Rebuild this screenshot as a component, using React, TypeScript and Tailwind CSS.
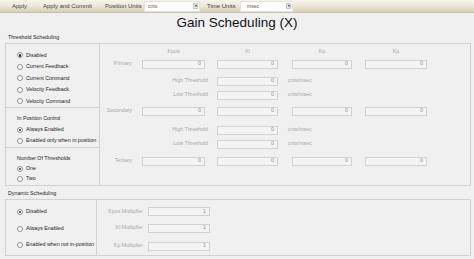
import React from "react";

function Radio({ checked, label, className = "" }: { checked?: boolean; label: string; className?: string }) {
  return (
    <div className={"flex items-center " + className}>
      <div className="ml-[11px] w-[6px] h-[6px] rounded-full border border-[#8e8f8f] bg-white flex items-center justify-center shrink-0">
        {checked ? <div className="w-[2.5px] h-[2.5px] rounded-full bg-[#2a2a2a]" /> : null}
      </div>
      <span className="ml-[3px] whitespace-nowrap">{label}</span>
    </div>
  );
}

function Input({ value, w }: { value: string; w: string }) {
  return (
    <div className={"h-[9px] border border-[#d2d2d2] bg-[#f4f4f4] flex items-center justify-end pr-[3px] text-[#909090] shrink-0 " + w}>
      {value}
    </div>
  );
}

function Combo({ text, w, pl }: { text: string; w: string; pl: string }) {
  return (
    <div className={"h-[11px] bg-white border border-[#e4e2da] flex items-center justify-between pr-[1px] shrink-0 " + w + " " + pl}>
      <span className="text-[5px] text-[#555]">{text}</span>
      <div className="w-[5px] h-[6px] bg-[#e2e2e2] border border-[#c4c4c4] flex items-center justify-center">
        <div className="w-0 h-0 border-l-[1.5px] border-r-[1.5px] border-t-[2px] border-l-transparent border-r-transparent border-t-[#333]" />
      </div>
    </div>
  );
}

export default function App() {
  return (
    <div className="w-[474px] h-[259px] bg-[#f0f0f0] overflow-hidden font-['Liberation_Sans','Arial',sans-serif] leading-none">
      {/* toolbar */}
      <div className="h-[13px] flex items-center bg-linear-to-b from-[#f7f6ee] via-[#ebe8da] to-[#d6d0b8] border-b border-[#c8c2a9] text-[6px] text-[#3c3c3c]">
        <div className="w-[12px] shrink-0" />
        <div className="w-[31px] shrink-0">Apply</div>
        <div className="w-[62px] shrink-0">Apply and Commit</div>
        <div className="w-[39px] shrink-0">Position Units</div>
        <Combo text="cnts" w="w-[56px]" pl="pl-[3px]" />
        <div className="w-[7px] shrink-0" />
        <div className="w-[33px] shrink-0">Time Units</div>
        <Combo text="msec" w="w-[53px]" pl="pl-[6px]" />
      </div>

      {/* title */}
      <div className="h-[20px] flex items-center justify-center text-[13.5px] text-[#111]">Gain Scheduling (X)</div>

      {/* threshold scheduling label */}
      <div className="h-[10px] flex items-center pl-[8px] text-[5.3px] text-[#222]">Threshold Scheduling</div>

      {/* threshold content */}
      <div className="ml-[5px] w-[466px] h-[143px] flex text-[5.3px]">
        {/* left panel */}
        <div className="w-[95px] h-full border border-[#d2d2d2] flex flex-col text-[#222]">
          <div className="h-[64px] border-b border-[#d2d2d2] pt-[5.5px] flex flex-col">
            <Radio checked label="Disabled" className="h-[11.5px]" />
            <Radio label="Current Feedback" className="h-[11.5px]" />
            <Radio label="Current Command" className="h-[11.5px]" />
            <Radio label="Velocity Feedback" className="h-[11.5px]" />
            <Radio label="Velocity Command" className="h-[11.5px]" />
          </div>
          <div className="h-[40px] border-b border-[#d2d2d2] pt-[5.5px] flex flex-col">
            <div className="h-[11px] flex items-center pl-[11px]">In Position Control</div>
            <Radio checked label="Always Enabled" className="h-[11px]" />
            <Radio label="Enabled only when in position" className="h-[11px]" />
          </div>
          <div className="flex-1 pt-[6px] flex flex-col">
            <div className="h-[10px] flex items-center pl-[11px]">Number Of Thresholds</div>
            <Radio checked label="One" className="h-[10px]" />
            <Radio label="Two" className="h-[10px]" />
          </div>
        </div>

        {/* right panel */}
        <div className="flex-1 h-full border border-l-0 border-[#d2d2d2] pt-[3px] flex flex-col text-[#a8a8a8]">
          {/* header */}
          <div className="h-[10px] flex items-center">
            <div className="w-[42px] shrink-0" />
            <div className="w-[63px] text-center shrink-0">Kpos</div>
            <div className="w-[12px] shrink-0" />
            <div className="w-[61px] text-center shrink-0">Ki</div>
            <div className="w-[14px] shrink-0" />
            <div className="w-[60px] text-center shrink-0">Kp</div>
            <div className="w-[13px] shrink-0" />
            <div className="w-[62px] text-center shrink-0">Kp</div>
          </div>
          <GainRow label="Primary" className="mt-[2px]" />
          <ThreshRow label="High Threshold" className="mt-[7px]" />
          <ThreshRow label="Low Threshold" className="mt-[4px]" />
          <GainRow label="Secondary" className="mt-[6px]" />
          <ThreshRow label="High Threshold" className="mt-[9px]" />
          <ThreshRow label="Low Threshold" className="mt-[4px]" />
          <GainRow label="Tertiary" className="mt-[7px]" />
        </div>
      </div>

      {/* dynamic scheduling label */}
      <div className="h-[13px] pt-[3px] flex items-center pl-[8px] text-[5.3px] text-[#222]">Dynamic Scheduling</div>

      {/* dynamic content */}
      <div className="ml-[5px] w-[466px] h-[57px] flex text-[5.3px]">
        <div className="w-[92px] h-full border border-[#d2d2d2] pt-[6.5px] flex flex-col text-[#222]">
          <Radio checked label="Disabled" className="h-[11px]" />
          <Radio label="Always Enabled" className="h-[11px] mt-[6px]" />
          <Radio label="Enabled when not in-position" className="h-[11px] mt-[5px]" />
        </div>
        <div className="flex-1 h-full border border-l-0 border-[#d2d2d2] pt-[6.5px] flex flex-col text-[#a8a8a8]">
          <MultRow label="Kpos Multiplier" className="" />
          <MultRow label="Ki Multiplier" className="mt-[6.5px]" />
          <MultRow label="Kp Multiplier" className="mt-[8px]" />
        </div>
      </div>
    </div>
  );
}

function GainRow({ label, className }: { label: string; className: string }) {
  return (
    <div className={"h-[10px] flex items-center " + className}>
      <div className="w-[42px] pr-[10px] text-right shrink-0 whitespace-nowrap">{label}</div>
      <Input value="0" w="w-[63px]" />
      <div className="w-[12px] shrink-0" />
      <Input value="0" w="w-[61px]" />
      <div className="w-[14px] shrink-0" />
      <Input value="0" w="w-[60px]" />
      <div className="w-[13px] shrink-0" />
      <Input value="0" w="w-[62px]" />
    </div>
  );
}

function ThreshRow({ label, className }: { label: string; className: string }) {
  return (
    <div className={"h-[10px] flex items-center " + className}>
      <div className="w-[117px] pr-[9px] text-right shrink-0 whitespace-nowrap">{label}</div>
      <Input value="0" w="w-[61px]" />
      <div className="ml-[10px] whitespace-nowrap">cnts/msec</div>
    </div>
  );
}

function MultRow({ label, className }: { label: string; className: string }) {
  return (
    <div className={"h-[10px] flex items-center " + className}>
      <div className="w-[51px] pr-[5px] text-right shrink-0 whitespace-nowrap">{label}</div>
      <Input value="1" w="w-[62px]" />
    </div>
  );
}
